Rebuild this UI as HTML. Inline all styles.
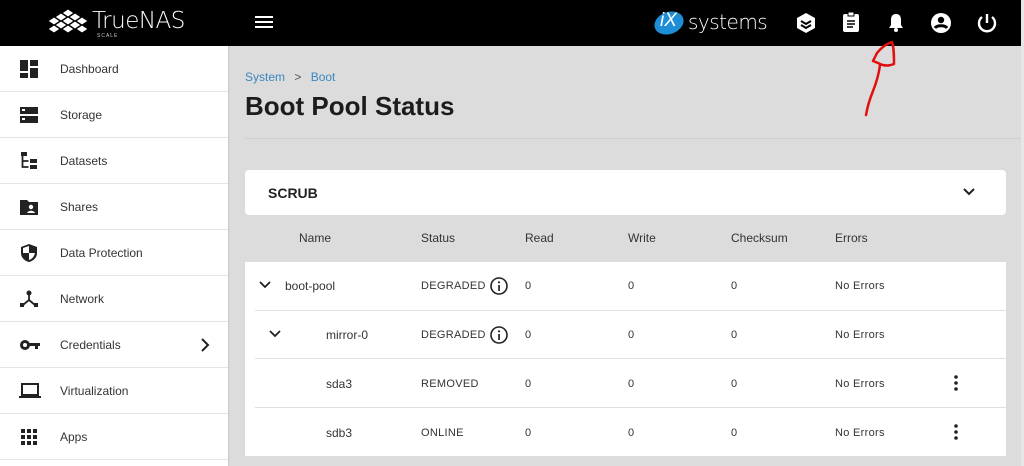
<!DOCTYPE html>
<html><head><meta charset="utf-8"><style>
*{margin:0;padding:0;box-sizing:border-box}
body{width:1024px;height:466px;overflow:hidden;background:#dcdcdc;font-family:"Liberation Sans",sans-serif;position:relative;color:#222}
.hdr{position:absolute;left:0;top:0;width:1021px;height:46px;background:#000}
.side{position:absolute;left:0;top:46px;width:229px;height:420px;background:#fff;border-right:1px solid #c8c8c8}
.item{height:46px;border-bottom:1px solid #e4e4e4;position:relative;font-size:12px;color:#333}
.item span{position:absolute;left:60px;top:16px}
.item svg{position:absolute;left:19px;top:13px}
.a{position:absolute}
.row{position:absolute;left:245px;width:761px;background:#fff;font-size:11px;color:#333}
.sep{position:absolute;left:255px;width:751px;height:1px;background:#e0e0e0}
</style></head><body>
<div class="hdr">
<svg class="a" style="left:45px;top:8px" width="46" height="28" viewBox="0 0 46 28"><g fill="#fff" stroke="#000" stroke-width="1"><path d="M23 1l6 4-6 4-6-4z"/><path d="M16 5l6 4-6 4-6-4z"/><path d="M30 5l6 4-6 4-6-4z"/><path d="M9 9l6 4-6 4-6-4z"/><path d="M37 9l6 4-6 4-6-4z"/><path d="M23 9l6 4-6 4-6-4z"/><path d="M16 13l6 4-6 4-6-4z"/><path d="M30 13l6 4-6 4-6-4z"/><path d="M9 17l6 4-6 4-6-4z"/><path d="M37 17l6 4-6 4-6-4z"/><path d="M23 17l6 4-6 4-6-4z"/></g></svg>
<div class="a" style="left:92px;top:8px;color:#fff;font-size:23px;font-family:'DejaVu Sans',sans-serif;font-weight:200;letter-spacing:-0.5px">TrueNAS</div>
<div class="a" style="left:97px;top:33px;color:#ccc;font-size:5px;letter-spacing:1px">SCALE</div>
<div class="a" style="left:255px;top:16px;width:18px;height:2px;background:#fff;box-shadow:0 5px 0 #fff,0 10px 0 #fff"></div>
<div class="a" style="left:654px;top:12px;width:30px;height:22px;border-radius:50%;background:#1e8fd6;transform:rotate(-20deg)"></div>
<div class="a" style="left:660px;top:10px;color:#fff;font-size:19px;font-style:italic">iX</div>
<div class="a" style="left:688px;top:10px;color:#fff;font-size:20px;font-family:'DejaVu Sans',sans-serif;font-weight:200;letter-spacing:-0.5px">systems</div>
<svg class="a" style="left:795px;top:12px" width="22" height="22" viewBox="0 0 22 22"><path d="M11 1l9 5v10l-9 5-9-5V6z" fill="#fff"/><path d="M6 9l5 3 5-3M6 13l5 3 5-3" stroke="#000" stroke-width="2" fill="none"/></svg>
<svg class="a" style="left:842px;top:11px" width="18" height="22" viewBox="0 0 18 22"><rect x="1" y="3" width="16" height="18" rx="2" fill="#fff"/><rect x="6" y="1" width="6" height="4" fill="#fff" stroke="#000"/><path d="M5 10h8M5 13h8M5 16h6" stroke="#000" stroke-width="1.6"/></svg>
<svg class="a" style="left:887px;top:12px" width="18" height="22" viewBox="0 0 18 22"><path d="M9 2c-4 0-5 3-5 6v5l-2 3h14l-2-3V8c0-3-1-6-5-6z" fill="#fff"/><circle cx="9" cy="18" r="2" fill="#fff"/></svg>
<svg class="a" style="left:930px;top:12px" width="22" height="22" viewBox="0 0 22 22"><circle cx="11" cy="11" r="10" fill="#fff"/><circle cx="11" cy="8" r="3.2" fill="#000"/><path d="M5 16c2-3 10-3 12 0" stroke="#000" stroke-width="3" fill="none"/></svg>
<svg class="a" style="left:976px;top:12px" width="22" height="22" viewBox="0 0 22 22"><path d="M11 2v9" stroke="#fff" stroke-width="2.4"/><path d="M6 5a8 8 0 1 0 10 0" stroke="#fff" stroke-width="2.4" fill="none"/></svg>
</div>
<div class="a" style="left:1021px;top:0;width:3px;height:466px;background:#e6e6e6"></div>

<div class="side">
<div class="item"><svg width="20" height="20"><rect x="1" y="1" width="8" height="11" fill="#222"/><rect x="11" y="1" width="8" height="6" fill="#222"/><rect x="1" y="14" width="8" height="5" fill="#222"/><rect x="11" y="9" width="8" height="10" fill="#222"/></svg><span>Dashboard</span></div>
<div class="item"><svg width="20" height="20"><rect x="1" y="2" width="18" height="7" fill="#222"/><rect x="1" y="11" width="18" height="7" fill="#222"/><rect x="3" y="4" width="3" height="2" fill="#fff"/><rect x="3" y="13" width="3" height="2" fill="#fff"/></svg><span>Storage</span></div>
<div class="item"><svg width="20" height="20"><rect x="2" y="1" width="6" height="4" fill="#222"/><path d="M3.5 5v11h6M3.5 10h6" stroke="#222" stroke-width="1.8" fill="none"/><rect x="11" y="8" width="7" height="4" fill="#222"/><rect x="11" y="14" width="7" height="4" fill="#222"/></svg><span>Datasets</span></div>
<div class="item"><svg width="20" height="20"><path d="M1 3h7l2 2h9v13H1z" fill="#222"/><circle cx="12" cy="10" r="2.2" fill="#fff"/><path d="M8 16c1-3 7-3 8 0z" fill="#fff"/></svg><span>Shares</span></div>
<div class="item"><svg width="20" height="20"><path d="M10 1l8 3v6c0 5-4 8-8 9-4-1-8-4-8-9V4z" fill="#222"/><path d="M10 10h6c-1 4-3 6-6 7zM10 3v7H4V5z" fill="#fff"/></svg><span>Data Protection</span></div>
<div class="item"><svg width="20" height="20"><circle cx="10" cy="4" r="2.5" fill="#222"/><path d="M10 5v6l-6 5M10 11l6 5" stroke="#222" stroke-width="1.8" fill="none"/><rect x="1" y="14" width="4" height="4" fill="#222"/><rect x="15" y="14" width="4" height="4" fill="#222"/></svg><span>Network</span></div>
<div class="item"><svg width="22" height="20"><circle cx="6" cy="10" r="5" fill="#222"/><circle cx="6" cy="10" r="2" fill="#fff"/><rect x="10" y="8" width="11" height="3" fill="#222"/><rect x="16" y="10" width="3" height="4" fill="#222"/></svg><span>Credentials</span><svg style="left:200px;top:16px" width="10" height="14"><path d="M2 1l6 6-6 6" stroke="#222" stroke-width="2" fill="none"/></svg></div>
<div class="item"><svg width="22" height="20"><rect x="3" y="3" width="16" height="11" fill="none" stroke="#222" stroke-width="2"/><rect x="0" y="15" width="22" height="2" fill="#222"/></svg><span>Virtualization</span></div>
<div class="item"><svg width="20" height="20"><g fill="#222"><rect x="2" y="2" width="4" height="4"/><rect x="8" y="2" width="4" height="4"/><rect x="14" y="2" width="4" height="4"/><rect x="2" y="8" width="4" height="4"/><rect x="8" y="8" width="4" height="4"/><rect x="14" y="8" width="4" height="4"/><rect x="2" y="14" width="4" height="4"/><rect x="8" y="14" width="4" height="4"/><rect x="14" y="14" width="4" height="4"/></g></svg><span>Apps</span></div>
</div>

<div class="a" style="left:245px;top:70px;font-size:12px;color:#3a87c0">System <span style="color:#555;margin:0 6px">&gt;</span> Boot</div>
<div class="a" style="left:245px;top:91px;font-size:26px;font-weight:bold;color:#1c1c1c">Boot Pool Status</div>
<div class="a" style="left:245px;top:138px;width:776px;height:1px;background:#cfcfcf"></div>

<div class="a" style="left:245px;top:170px;width:761px;height:45px;background:#fff;border-radius:4px"></div>
<div class="a" style="left:268px;top:185px;font-size:14px;font-weight:bold;color:#222">SCRUB</div>
<svg class="a" style="left:963px;top:188px" width="12" height="9"><path d="M1 1l5 5 5-5" stroke="#222" stroke-width="2" fill="none"/></svg>

<div class="a" style="left:0;top:231px;width:1000px;font-size:12px;color:#333">
<span class="a" style="left:299px">Name</span><span class="a" style="left:421px">Status</span><span class="a" style="left:525px">Read</span><span class="a" style="left:628px">Write</span><span class="a" style="left:731px">Checksum</span><span class="a" style="left:835px">Errors</span></div>

<div class="row" style="top:262px;height:194px"></div>
<div class="sep" style="top:310px"></div><div class="sep" style="top:358px"></div><div class="sep" style="top:407px"></div>

<div class="a" style="left:0;top:262px;width:1000px;font-size:12px;color:#333">
<svg class="a" style="left:259px;top:19px" width="12" height="8"><path d="M1 1l5 5 5-5" stroke="#222" stroke-width="1.8" fill="none"/></svg>
<span class="a" style="left:285px;top:17px">boot-pool</span>
<svg class="a" style="left:269px;top:68px" width="12" height="8"><path d="M1 1l5 5 5-5" stroke="#222" stroke-width="1.8" fill="none"/></svg>
<span class="a" style="left:326px;top:66px">mirror-0</span>
<span class="a" style="left:326px;top:115px">sda3</span>
<span class="a" style="left:326px;top:164px">sdb3</span>
</div>
<div class="a" style="left:0;top:262px;width:1000px;font-size:11px;color:#333;letter-spacing:0.3px">
<span class="a" style="left:421px;top:18px">DEGRADED</span><span class="a" style="left:421px;top:67px">DEGRADED</span><span class="a" style="left:421px;top:116px">REMOVED</span><span class="a" style="left:421px;top:165px">ONLINE</span>
<span class="a" style="left:525px;top:18px">0</span><span class="a" style="left:525px;top:67px">0</span><span class="a" style="left:525px;top:116px">0</span><span class="a" style="left:525px;top:165px">0</span>
<span class="a" style="left:628px;top:18px">0</span><span class="a" style="left:628px;top:67px">0</span><span class="a" style="left:628px;top:116px">0</span><span class="a" style="left:628px;top:165px">0</span>
<span class="a" style="left:731px;top:18px">0</span><span class="a" style="left:731px;top:67px">0</span><span class="a" style="left:731px;top:116px">0</span><span class="a" style="left:731px;top:165px">0</span>
<span class="a" style="left:835px;top:18px">No Errors</span><span class="a" style="left:835px;top:67px">No Errors</span><span class="a" style="left:835px;top:116px">No Errors</span><span class="a" style="left:835px;top:165px">No Errors</span>
</div>
<svg class="a" style="left:489px;top:276px" width="20" height="20"><circle cx="10" cy="10" r="8" stroke="#222" stroke-width="1.6" fill="none"/><rect x="9.2" y="9" width="1.7" height="6" fill="#222"/><circle cx="10" cy="6.3" r="1.1" fill="#222"/></svg>
<svg class="a" style="left:489px;top:325px" width="20" height="20"><circle cx="10" cy="10" r="8" stroke="#222" stroke-width="1.6" fill="none"/><rect x="9.2" y="9" width="1.7" height="6" fill="#222"/><circle cx="10" cy="6.3" r="1.1" fill="#222"/></svg>
<svg class="a" style="left:953px;top:374px" width="6" height="18"><circle cx="3" cy="3" r="1.8" fill="#222"/><circle cx="3" cy="9" r="1.8" fill="#222"/><circle cx="3" cy="15" r="1.8" fill="#222"/></svg>
<svg class="a" style="left:953px;top:423px" width="6" height="18"><circle cx="3" cy="3" r="1.8" fill="#222"/><circle cx="3" cy="9" r="1.8" fill="#222"/><circle cx="3" cy="15" r="1.8" fill="#222"/></svg>

<svg class="a" style="left:0;top:0" width="1024" height="466"><path d="M866 115c1-6 3-14 7-24 4-10 6-18 7-26M878 63l-5-2 4-8c4-5 9-9 15-11 2 6 2 14 2 22-5 2-11 2-16-1" stroke="#e01010" stroke-width="2.5" fill="none" stroke-linecap="round" stroke-linejoin="round"/></svg>
</body></html>
